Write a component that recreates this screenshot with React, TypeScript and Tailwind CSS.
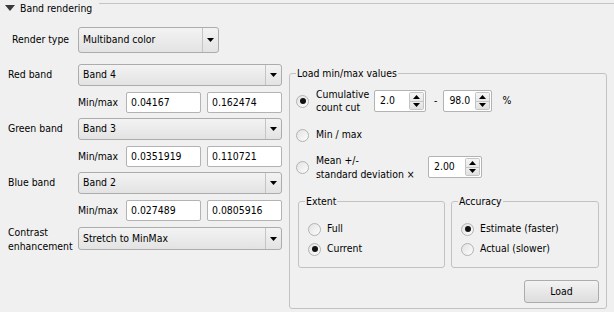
import React from "react";

function DownArrow() {
  return (
    <svg width="7" height="4" viewBox="0 0 7 4" className="block">
      <path d="M0 0 H7 L3.5 4 Z" fill="#000" />
    </svg>
  );
}
function UpArrow() {
  return (
    <svg width="7" height="4" viewBox="0 0 7 4" className="block">
      <path d="M0 4 H7 L3.5 0 Z" fill="#000" />
    </svg>
  );
}

function Combo({ value, className }: { value: string; className: string }) {
  return (
    <div
      className={`flex items-stretch rounded-[3px] border border-[#acacac] bg-linear-to-b from-[#f3f3f3] to-[#e3e3e3] ${className}`}
    >
      <div className="flex flex-1 items-center pl-[4px] whitespace-nowrap">{value}</div>
      <div className="flex w-[16px] items-center justify-center border-l border-[#c4c4c4]">
        <DownArrow />
      </div>
    </div>
  );
}

function Field({ value }: { value: string }) {
  return (
    <div className="flex h-[21px] w-[75px] items-center rounded-[2px] border border-[#b3b3b3] bg-white pl-[4px]">
      {value}
    </div>
  );
}

function Spin({ value, className }: { value: string; className: string }) {
  return (
    <div className={`flex h-[22px] items-stretch rounded-[2px] border border-[#b3b3b3] bg-white ${className}`}>
      <div className="flex flex-1 items-center pl-[5px]">{value}</div>
      <div className="my-[1px] mr-[1px] flex w-[15px] flex-col rounded-[2px] border border-[#c4c4c4]">
        <div className="flex flex-1 items-center justify-center border-b border-[#c4c4c4] bg-linear-to-b from-[#f5f5f5] to-[#e8e8e8]">
          <UpArrow />
        </div>
        <div className="flex flex-1 items-center justify-center bg-linear-to-b from-[#ededed] to-[#e0e0e0]">
          <DownArrow />
        </div>
      </div>
    </div>
  );
}

function Radio({ checked }: { checked?: boolean }) {
  return (
    <span className="flex h-[13px] w-[13px] shrink-0 items-center justify-center rounded-full border border-[#b2b2b2] bg-linear-to-br from-[#e2e2e2] to-[#fdfdfd]">
      {checked && <span className="h-[6px] w-[6px] rounded-full bg-[#111]" />}
    </span>
  );
}

function GroupBox({
  title,
  className,
  children,
}: {
  title: string;
  className: string;
  children: React.ReactNode;
}) {
  return (
    <div className={`relative rounded-[3px] border border-[#c2c2c2] ${className}`}>
      <span className="absolute left-[6px] top-[-8px] bg-[#f0f0f0] px-[1px] leading-[14px]">{title}</span>
      {children}
    </div>
  );
}

function BandRows({ label, band, min, max }: { label: string; band: string; min: string; max: string }) {
  return (
    <>
      <div className="mt-[5px] flex h-[22px] items-center">
        <span className="w-[78px] pl-[8px]">{label}</span>
        <Combo value={band} className="h-[22px] w-[204px]" />
      </div>
      <div className="mt-[6px] flex h-[21px] items-center pl-[78px]">
        <span className="w-[48px]">Min/max</span>
        <Field value={min} />
        <div className="w-[6px]" />
        <Field value={max} />
      </div>
    </>
  );
}

export default function App() {
  return (
    <div className="flex h-[312px] w-[614px] flex-col overflow-hidden bg-[#f0f0f0] text-[10.4px] text-black [font-family:'DejaVu_Sans_Condensed','Liberation_Sans',sans-serif]">
      <div className="flex h-[16px] shrink-0 items-start">
        <svg width="10" height="6" viewBox="0 0 10 6" className="ml-[5px] mt-[5px] block">
          <path d="M0 0 H10 L5 6 Z" fill="#3a3a3a" />
        </svg>
        <span className="ml-[5px] leading-[16px]">Band rendering</span>
        <div className="ml-[7px] mt-[3px] flex-1 border-t border-[#c4c4c4]" />
      </div>

      <div className="flex items-start">
        {/* left column */}
        <div className="flex w-[282px] flex-col">
          <div className="mt-[11px] flex h-[26px] items-center">
            <span className="w-[78px] pl-[12px]">Render type</span>
            <Combo value="Multiband color" className="h-[26px] w-[141px]" />
          </div>
          <div className="h-[6px]" />
          <BandRows label="Red band" band="Band 4" min="0.04167" max="0.162474" />
          <BandRows label="Green band" band="Band 3" min="0.0351919" max="0.110721" />
          <BandRows label="Blue band" band="Band 2" min="0.027489" max="0.0805916" />
          <div className="mt-[6px] flex h-[23px] items-center">
            <span className="w-[78px] pl-[8px] leading-[14px]">
              Contrast
              <br />
              enhancement
            </span>
            <Combo value="Stretch to MinMax" className="h-[23px] w-[204px]" />
          </div>
        </div>

        {/* right column */}
        <GroupBox title="Load min/max values" className="ml-[7px] mt-[57px] flex h-[236px] w-[318px] flex-col pl-[6px]">
          <div className="mt-[13px] flex h-[28px] items-center">
            <Radio checked />
            <span className="ml-[7px] w-[60px] leading-[13px]">
              Cumulative
              <br />
              count cut
            </span>
            <Spin value="2.0" className="ml-[-2px] w-[52px]" />
            <span className="ml-[8px]">-</span>
            <Spin value="98.0" className="ml-[6px] w-[49px]" />
            <span className="ml-[10px]">%</span>
          </div>
          <div className="mt-[6px] flex h-[28px] items-center">
            <Radio />
            <span className="ml-[7px]">Min / max</span>
          </div>
          <div className="mt-[4px] flex h-[28px] items-center">
            <Radio />
            <span className="ml-[7px] w-[107px] leading-[14px]">
              Mean +/-
              <br />
              standard deviation ×
            </span>
            <Spin value="2.00" className="ml-[5px] w-[54px]" />
          </div>
          <div className="ml-[2px] mt-[20px] flex gap-[6px]">
            <GroupBox title="Extent" className="flex h-[67px] w-[147px] flex-col pl-[9px] pt-[17px]">
              <div className="flex h-[20px] items-center">
                <Radio />
                <span className="ml-[6px]">Full</span>
              </div>
              <div className="flex h-[20px] items-center">
                <Radio checked />
                <span className="ml-[6px]">Current</span>
              </div>
            </GroupBox>
            <GroupBox title="Accuracy" className="flex h-[67px] w-[148px] flex-col pl-[9px] pt-[17px]">
              <div className="flex h-[20px] items-center">
                <Radio checked />
                <span className="ml-[6px]">Estimate (faster)</span>
              </div>
              <div className="flex h-[20px] items-center">
                <Radio />
                <span className="ml-[6px]">Actual (slower)</span>
              </div>
            </GroupBox>
          </div>
          <div className="mt-[12px] flex w-[303px] justify-end">
            <div className="flex h-[23px] w-[75px] items-center justify-center rounded-[3px] border border-[#acacac] bg-linear-to-b from-[#f3f3f3] to-[#dddddd]">
              Load
            </div>
          </div>
        </GroupBox>
      </div>
    </div>
  );
}
